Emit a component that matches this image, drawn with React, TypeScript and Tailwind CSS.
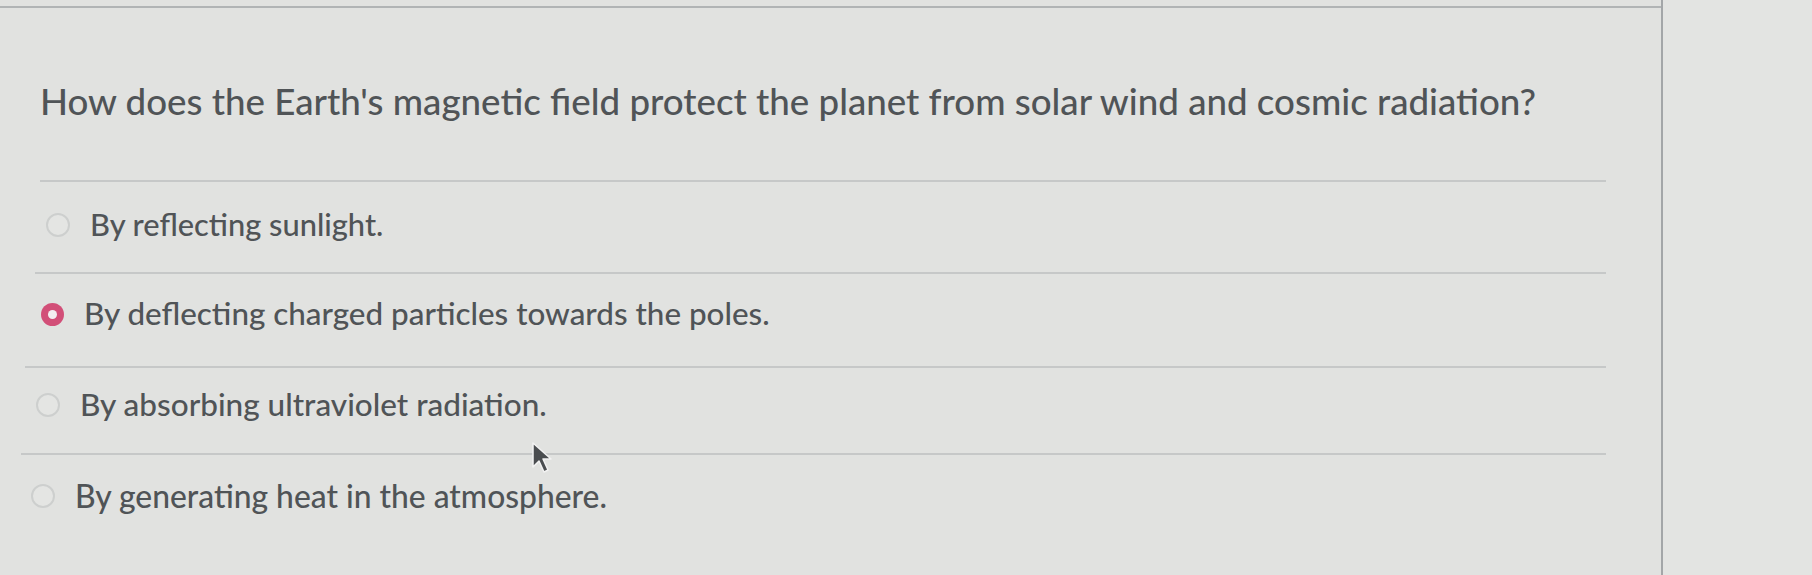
import React from "react";

type Opt = { text: string; selected?: boolean; row: string; fs: string; pb: string };

const options: Opt[] = [
  { text: "By reflecting sunlight.", row: "ml-[40px] pl-[6px] h-[92px]", fs: "text-[30.8px]", pb: "pb-[4px]" },
  { text: "By deflecting charged particles towards the poles.", selected: true, row: "ml-[35px] pl-[6px] h-[94px]", fs: "text-[31.4px]", pb: "pb-[12px]" },
  { text: "By absorbing ultraviolet radiation.", row: "ml-[25px] pl-[11px] h-[87px]", fs: "text-[31.5px]", pb: "pb-[12px]" },
  { text: "By generating heat in the atmosphere.", row: "ml-[21px] pl-[10px] h-[95px]", fs: "text-[31.8px]", pb: "pb-[10px]" },
];

function Radio({ selected }: { selected?: boolean }) {
  if (selected) {
    return (
      <span className="flex h-[23px] w-[23px] shrink-0 items-center justify-center rounded-full bg-[#d24f78]">
        <span className="h-[9px] w-[9px] rounded-full bg-[#f3eef0]" />
      </span>
    );
  }
  return <span className="h-[24px] w-[24px] shrink-0 rounded-full border-2 border-[#cdcfce] bg-[#e4e5e3]" />;
}

export default function App() {
  return (
    <div className="flex h-[575px] w-[1812px] overflow-hidden bg-[#e1e2e0] font-['Lato','Open_Sans',sans-serif] text-[#505457]">
      <div className="relative w-[1663px] shrink-0 border-r-2 border-[#a3a6a8]">
        <div className="mt-[6px] border-t-2 border-[#b1b4b5]" />
        <div className="mr-[55px]">
          <div className="flex h-[172px] items-center pl-[40px] pt-[14px] text-[36.7px] font-medium leading-none">
            How does the Earth's magnetic field protect the planet from solar wind and cosmic radiation?
          </div>
          {options.map((o, i) => (
            <div
              key={i}
              className={`flex items-center border-t-2 border-[#c6c8c8] ${o.row} ${o.fs} font-medium leading-none`}
            >
              <div className={`flex items-center gap-[20px] ${o.pb}`}>
                <Radio selected={o.selected} />
                <span>{o.text}</span>
              </div>
            </div>
          ))}
        </div>
        <svg
          className="absolute left-[530px] top-[441px]"
          width="24"
          height="36"
          viewBox="0 0 24 36"
        >
          <path
            d="M3 2 L3 26 L9 20 L14 31 L18 29 L13 18 L21 18 Z"
            fill="#4a4d50"
            stroke="#f2f2f2"
            strokeWidth="1.5"
            strokeLinejoin="round"
          />
        </svg>
      </div>
      <div className="flex-1 bg-[#e3e4e2]" />
    </div>
  );
}
